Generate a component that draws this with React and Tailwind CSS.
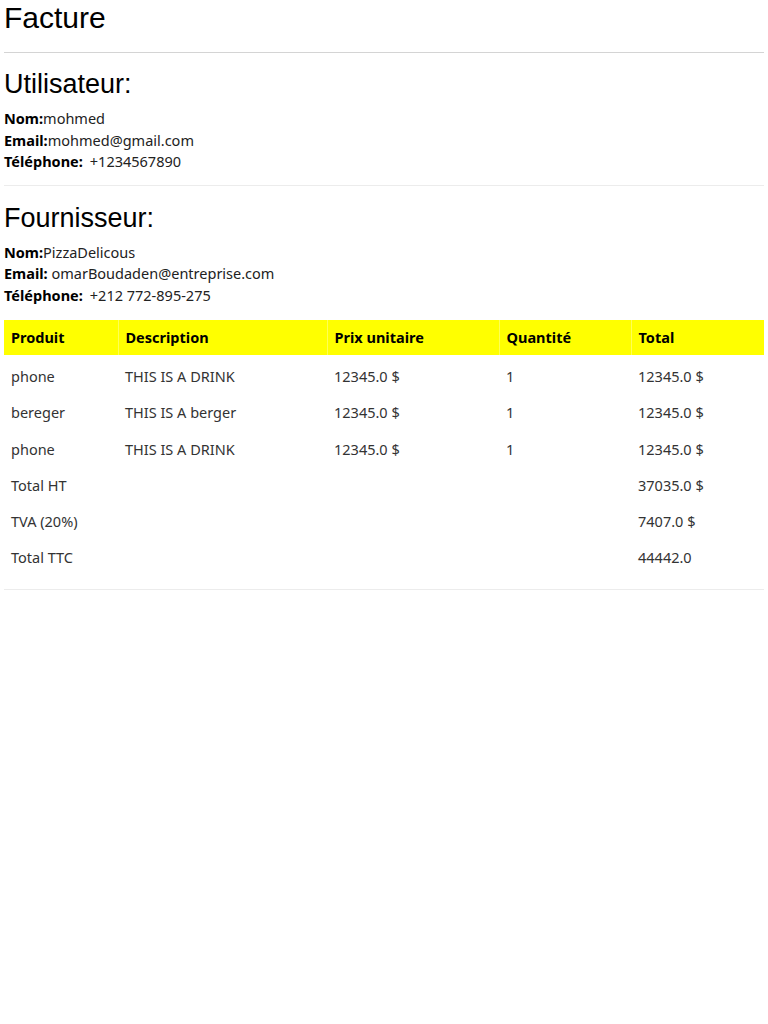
import React from "react";

const user = {
  nom: "mohmed",
  email: "mohmed@gmail.com",
  telephone: "+1234567890",
};

const fournisseur = {
  nom: "PizzaDelicous",
  email: "omarBoudaden@entreprise.com",
  telephone: "+212 772-895-275",
};

const lignes = [
  { produit: "phone", description: "THIS IS A DRINK", prix: 12345.0, quantite: 1 },
  { produit: "bereger", description: "THIS IS A berger", prix: 12345.0, quantite: 1 },
  { produit: "phone", description: "THIS IS A DRINK", prix: 12345.0, quantite: 1 },
];

const bodyFont = { fontFamily: "'Noto Sans', 'Open Sans', sans-serif" };

const App = () => {
  const totalHT = lignes.reduce((acc, l) => acc + l.prix * l.quantite, 0);
  const tva = totalHT * 0.2;
  const totalTTC = totalHT + tva;

  return (
    <div className="px-1 bg-white min-h-screen text-[#222]" style={bodyFont}>
      <h1 className="pt-[2px] text-[30px] leading-8 font-normal text-black font-['Liberation_Sans',Arial,sans-serif]">
        Facture
      </h1>
      <hr className="mt-[18px] border-t border-[#d4d4d4]" />

      {/* utilisateur */}
      <h2 className="mt-[15px] text-[27px] leading-8 text-black font-['Liberation_Sans',Arial,sans-serif]">
        Utilisateur:
      </h2>
      <div className="mt-[8px] text-[14.5px] leading-[21.5px]">
        <p>
          <b className="text-black">Nom:</b>
          {user.nom}
        </p>
        <p>
          <b className="text-black">Email:</b>
          {user.email}
        </p>
        <p>
          <b className="text-black">Téléphone:</b>
          <span className="ml-[7px]">{user.telephone}</span>
        </p>
      </div>
      <hr className="mt-[12px] border-t border-[#ececec]" />

      {/* fournisseur */}
      <h2 className="mt-[16px] text-[27px] leading-8 text-black font-['Liberation_Sans',Arial,sans-serif]">
        Fournisseur:
      </h2>
      <div className="mt-[8px] text-[14.5px] leading-[21.5px]">
        <p>
          <b className="text-black">Nom:</b>
          {fournisseur.nom}
        </p>
        <p>
          <b className="text-black">Email: </b>
          {fournisseur.email}
        </p>
        <p>
          <b className="text-black">Téléphone:</b>
          <span className="ml-[7px]">{fournisseur.telephone}</span>
        </p>
      </div>

      <table className="mt-[14px] w-full text-[14.5px] text-left border-collapse">
        <thead>
          <tr className="bg-[#ffff00] text-black">
            <th className="w-[114px] px-[7px] h-[35px] font-bold border-r border-[#ffff55]">Produit</th>
            <th className="w-[209px] px-[7px] font-bold border-r border-[#ffff55]">Description</th>
            <th className="w-[172px] px-[7px] font-bold border-r border-[#ffff55]">Prix unitaire</th>
            <th className="w-[132px] px-[7px] font-bold border-r border-[#ffff55]">Quantité</th>
            <th className="px-[7px] font-bold">Total</th>
          </tr>
        </thead>
        <tbody className="text-[#333]">
          {lignes.map((l, i) => (
            <tr key={i} className={i === 0 ? "h-[40px] [&>td]:pt-[4px]" : "h-[36.3px]"}>
              <td className="px-[7px]">{l.produit}</td>
              <td className="px-[7px]">{l.description}</td>
              <td className="px-[7px]">{l.prix.toFixed(1)} $</td>
              <td className="px-[7px]">{l.quantite}</td>
              <td className="px-[7px]">{(l.prix * l.quantite).toFixed(1)} $</td>
            </tr>
          ))}
          <tr className="h-[36.3px]">
            <td className="px-[7px]" colSpan={4}>Total HT</td>
            <td className="px-[7px]">{totalHT.toFixed(1)} $</td>
          </tr>
          <tr className="h-[36.3px]">
            <td className="px-[7px]" colSpan={4}>TVA (20%)</td>
            <td className="px-[7px]">{tva.toFixed(1)} $</td>
          </tr>
          <tr className="h-[36.3px]">
            <td className="px-[7px]" colSpan={4}>Total TTC</td>
            <td className="px-[7px]">{totalTTC.toFixed(1)}</td>
          </tr>
        </tbody>
      </table>
      <hr className="mt-[13px] border-t border-[#ececec]" />
    </div>
  );
};

export default App;
